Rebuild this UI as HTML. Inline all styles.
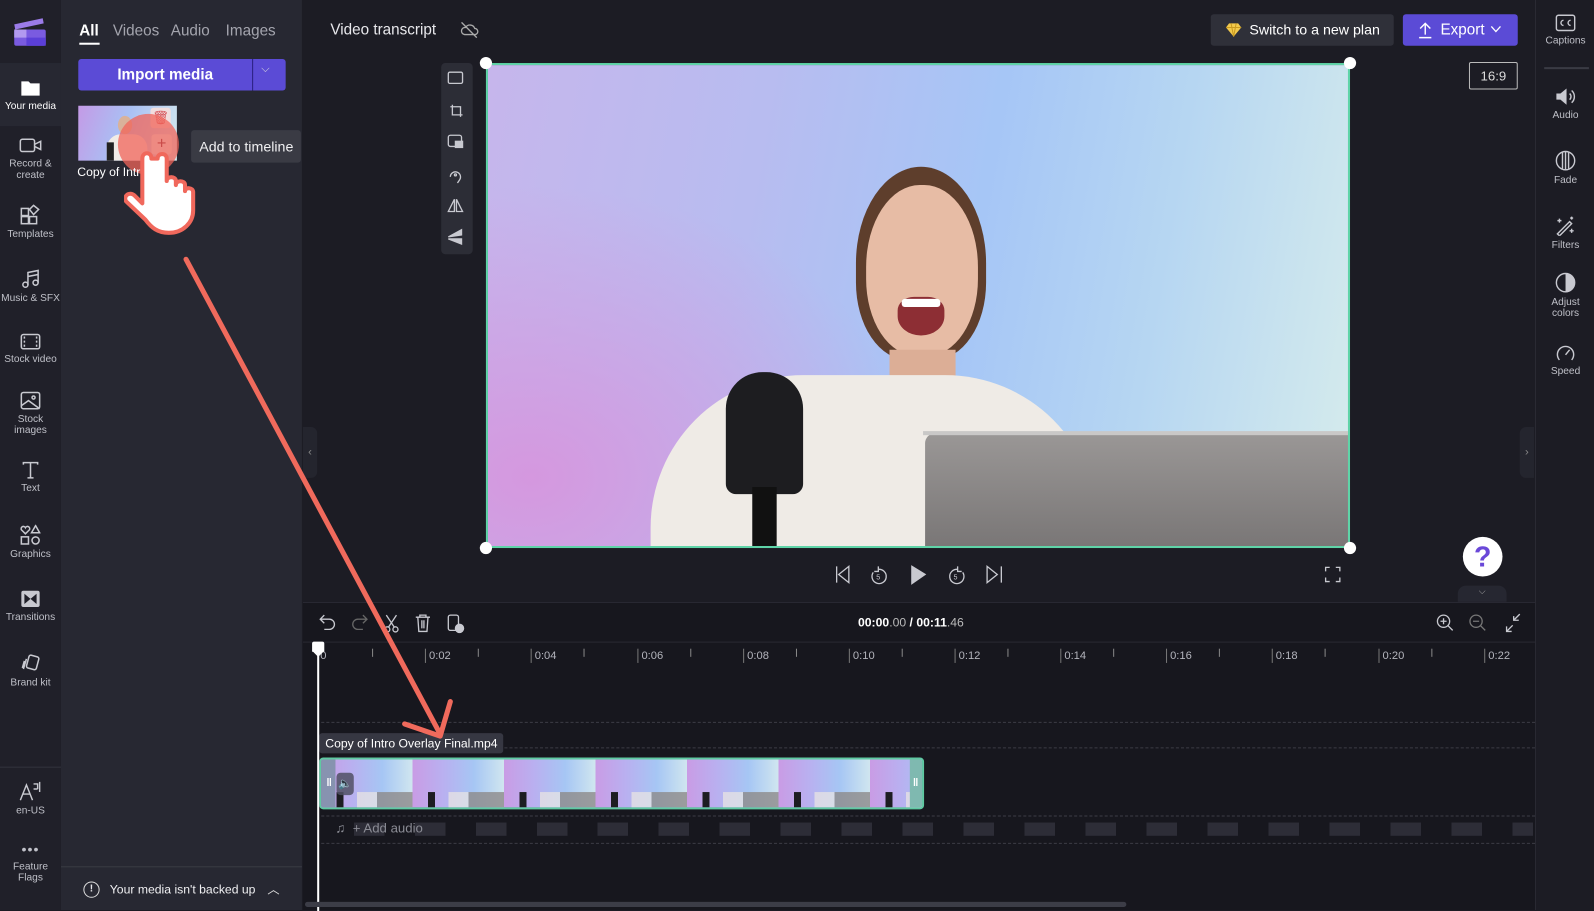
<!DOCTYPE html>
<html><head><meta charset="utf-8"><style>
*{margin:0;padding:0;box-sizing:border-box}
html,body{width:1594px;height:910px;overflow:hidden;background:#1c1c24;font-family:"Liberation Sans",sans-serif;color:#e6e6ea}
#root{position:absolute;left:0;top:0;width:1568px;height:895px;transform:scale(1.01658,1.01676);transform-origin:0 0;background:#1c1c24}
.abs{position:absolute}
.nav{left:0;top:0;width:60px;height:895px;background:#202029}
.navi{position:absolute;left:0;width:60px;text-align:center;font-size:10px;color:#bfc0c8;line-height:11px}
.navi svg{display:block;margin:0 auto 4px}
.panel{left:60px;top:0;width:237px;height:895px;background:#272832}
.tab{position:absolute;top:22px;font-size:15px;color:#a4a5ae}
.rs{left:1510px;top:0;width:58px;height:895px;background:#1c1c24;border-left:1px solid #2b2b34}
.rsi{position:absolute;left:0;width:58px;text-align:center;font-size:10px;color:#bfc0c8;line-height:11px}
.rsi svg{display:block;margin:0 auto 4px}
.tl{left:298px;top:592px;width:1212px;height:303px;background:#17171e;border-top:1px solid #2a2a33}
.tick{position:absolute;top:45px;font-size:11px;color:#b4b5bd;border-left:1px solid #777;padding-left:3px;height:14px;line-height:14px}
.st{position:absolute;top:45px;width:1px;height:8px;background:#888}
</style></head><body><div id="root">

<div class="abs nav">
 <div class="abs" style="left:12px;top:14px;width:34px;height:32px">
  <svg width="34" height="32" viewBox="0 0 34 32"><path d="M2 10 L30 4 L31 9 L3 15Z" fill="#9b7be8"/><rect x="2" y="15" width="31" height="16" rx="2" fill="#7a5be0"/><rect x="2" y="15" width="12" height="8" fill="#b29af0"/><rect x="14" y="23" width="19" height="8" fill="#5b3fd8"/></svg>
 </div>
 <div class="abs" style="left:0;top:62px;width:60px;height:62px;background:#272832"></div>
 <div class="navi" style="top:77px;color:#fff"><svg width="20" height="18" viewBox="0 0 20 18"><path d="M1 3h7l2 2h9v12H1z" fill="#fff"/></svg>Your media</div>
 <div class="navi" style="top:134px"><svg width="22" height="18" viewBox="0 0 22 18" fill="none" stroke="#c8c9d0" stroke-width="1.5"><rect x="1" y="3" width="14" height="12" rx="2"/><path d="M15 8l6-3v8l-6-3"/></svg>Record &amp;<br>create</div>
 <div class="navi" style="top:201px"><svg width="20" height="20" viewBox="0 0 20 20" fill="none" stroke="#c8c9d0" stroke-width="1.5"><rect x="1" y="4" width="7" height="7"/><rect x="1" y="12" width="7" height="7"/><rect x="9" y="12" width="7" height="7"/><path d="M13 1l5 4-5 5-4-5z"/></svg>Templates</div>
 <div class="navi" style="top:264px"><svg width="18" height="20" viewBox="0 0 18 20" fill="none" stroke="#c8c9d0" stroke-width="1.5"><circle cx="4" cy="16" r="2.5"/><circle cx="14" cy="14" r="2.5"/><path d="M6.5 16V4l10-2v12M6.5 8l10-2"/></svg>Music &amp; SFX</div>
 <div class="navi" style="top:328px"><svg width="20" height="16" viewBox="0 0 20 16" fill="none" stroke="#c8c9d0" stroke-width="1.5"><rect x="1" y="1" width="18" height="14" rx="2"/><path d="M4 3v10M16 3v10" stroke-dasharray="2 2"/></svg>Stock video</div>
 <div class="navi" style="top:385px"><svg width="20" height="18" viewBox="0 0 20 18" fill="none" stroke="#c8c9d0" stroke-width="1.5"><rect x="1" y="1" width="18" height="16" rx="2"/><circle cx="13" cy="6" r="1.5"/><path d="M1 14l7-5 11 8"/></svg>Stock<br>images</div>
 <div class="navi" style="top:453px"><svg width="18" height="18" viewBox="0 0 18 18" fill="none" stroke="#c8c9d0" stroke-width="1.5"><path d="M2 4V2h14v2M9 2v15M6 17h6"/></svg>Text</div>
 <div class="navi" style="top:516px"><svg width="20" height="20" viewBox="0 0 20 20" fill="none" stroke="#c8c9d0" stroke-width="1.5"><path d="M5 9L1 5a2 2 0 014-2 2 2 0 014 2z"/><path d="M15 1l4 7h-8z"/><rect x="1" y="12" width="7" height="7"/><circle cx="15" cy="15.5" r="3.5"/></svg>Graphics</div>
 <div class="navi" style="top:580px"><svg width="20" height="18" viewBox="0 0 20 18"><rect x="1" y="1" width="18" height="16" rx="2" fill="#c8c9d0"/><path d="M4 4l6 5-6 5zM16 4l-6 5 6 5z" fill="#202029"/></svg>Transitions</div>
 <div class="navi" style="top:642px"><svg width="20" height="20" viewBox="0 0 20 20" fill="none" stroke="#c8c9d0" stroke-width="1.5"><rect x="7" y="3" width="10" height="13" rx="2" transform="rotate(15 12 10)"/><path d="M6 6L3 16M4 8l-2 7"/></svg>Brand kit</div>
 <div class="abs" style="left:0;top:754px;width:60px;height:1px;background:#33343d"></div>
 <div class="navi" style="top:768px"><svg width="22" height="20" viewBox="0 0 22 20" fill="none" stroke="#c8c9d0" stroke-width="1.4"><path d="M1 19L7 4l6 15M3 13h8M14 3h4v5M20 1v10M14 8h4"/></svg>en-US</div>
 <div class="navi" style="top:830px;font-size:10px"><div style="font-size:14px;letter-spacing:1px;margin-bottom:6px">•••</div>Feature<br>Flags</div>
</div>

<div class="abs panel">
 <div class="tab" style="left:18px;color:#fff;font-weight:bold">All</div>
 <div class="abs" style="left:18px;top:42px;width:20px;height:2px;background:#fff"></div>
 <div class="tab" style="left:51px">Videos</div>
 <div class="tab" style="left:108px">Audio</div>
 <div class="tab" style="left:162px">Images</div>
 <div class="abs" style="left:17px;top:58px;width:204px;height:31px;background:#5b4bd6;border-radius:3px"></div>
 <div class="abs" style="left:17px;top:58px;width:171px;height:31px;line-height:31px;text-align:center;font-size:15px;color:#fff;font-weight:bold">Import media</div>
 <div class="abs" style="left:188px;top:58px;width:1px;height:31px;background:#2a2080"></div>
 <div class="abs" style="left:197px;top:62px;font-size:11px;color:#ddd">⌵</div>
 <div class="abs" style="left:17px;top:104px;width:97px;height:54px;background:linear-gradient(110deg,#c49ae6 0%,#a9c0f4 45%,#d7ecef 100%);overflow:hidden">
   <div class="abs" style="left:39px;top:10px;width:14px;height:18px;border-radius:50%;background:#d9b29a"></div>
   <div class="abs" style="left:28px;top:28px;width:40px;height:30px;border-radius:14px 14px 0 0;background:#f1ece6"></div>
   <div class="abs" style="left:28px;top:36px;width:7px;height:20px;background:#222"></div>
 </div>
 <div class="abs" style="left:88px;top:106px;width:20px;height:20px;background:#f1dede;border-radius:3px;color:#d6545a;font-size:13px;text-align:center;line-height:20px">🗑</div>
 <div class="abs" style="left:56px;top:112px;width:60px;height:60px;border-radius:50%;background:rgba(240,100,90,0.75)"></div>
 <div class="abs" style="left:89px;top:132px;width:20px;height:20px;background:rgba(240,140,130,0.8);border-radius:3px;color:#c94a48;text-align:center;line-height:20px;font-size:16px">+</div>
 <div class="abs" style="left:16px;top:162px;font-size:12px;color:#fff">Copy of Intro</div>
 <div class="abs" style="left:128px;top:128px;width:108px;height:32px;background:#3a3b44;border-radius:3px;font-size:14px;line-height:32px;padding-left:8px;color:#f0f0f2">Add to timeline</div>
 <svg class="abs" style="left:62px;top:148px" width="75" height="95" viewBox="0 0 75 95"><path d="M36 18c0-6 9-6 9 0v22c0-5 9-5 9 0v4c0-5 9-5 9 0v6c0-4 8-4 8 1v18c0 12-10 22-24 22-11 0-17-5-23-13L5 60c-3-5 3-10 8-6l8 8V18c0-7 9-7 9 0z" transform="translate(-3,-10)" fill="#fff" stroke="#f0685c" stroke-width="4" stroke-linejoin="round"/></svg>
 <div class="abs" style="left:0;top:852px;width:237px;height:1px;background:#3a3b44"></div>
 <div class="abs" style="left:22px;top:867px;width:16px;height:16px;border:1.5px solid #ddd;border-radius:50%;font-size:10px;text-align:center;line-height:13px;font-weight:bold">!</div>
 <div class="abs" style="left:48px;top:868px;font-size:12px;color:#f0f0f2">Your media isn't backed up</div>
 <div class="abs" style="left:203px;top:866px;font-size:12px;color:#ddd">︿</div>
</div>

<div class="abs" style="left:325px;top:21px;font-size:15px;color:#e8e8ec">Video transcript</div>
<svg class="abs" style="left:452px;top:21px" width="19" height="17" viewBox="0 0 19 17" fill="none" stroke="#aaa" stroke-width="1.3"><path d="M5 13h10a3 3 0 000-6 5 5 0 00-9-1 3.5 3.5 0 00-1 7zM2 1l15 15"/></svg>
<div class="abs" style="left:1191px;top:14px;width:180px;height:31px;background:#2f3039;border-radius:3px;font-size:14px;line-height:31px;padding-left:38px;color:#fff">Switch to a new plan</div>
<svg class="abs" style="left:1205px;top:22px" width="17" height="15" viewBox="0 0 17 15"><path d="M4 1h9l3 4-7.5 9L1 5z" fill="#f2c94c"/><path d="M1 5h15M6 1l2.5 13L11 1" stroke="#c99a20" fill="none"/></svg>
<div class="abs" style="left:1380px;top:14px;width:113px;height:31px;background:#5b4bd6;border-radius:3px;font-size:15px;line-height:31px;padding-left:37px;color:#fff">Export</div>
<svg class="abs" style="left:1395px;top:21px" width="14" height="17" viewBox="0 0 14 17" fill="none" stroke="#fff" stroke-width="1.4"><path d="M7 13V2M2 7l5-5 5 5M1 16h12"/></svg>
<svg class="abs" style="left:1466px;top:25px" width="11" height="8" viewBox="0 0 11 8" fill="none" stroke="#fff" stroke-width="1.3"><path d="M1 1l4.5 5L10 1"/></svg>
<div class="abs" style="left:1445px;top:61px;width:48px;height:27px;border:1px solid #bbb;border-radius:2px;font-size:13px;line-height:25px;text-align:center;color:#ddd">16:9</div>

<div class="abs" style="left:434px;top:62px;width:31px;height:188px;background:#2c2d36;border-radius:4px"></div>
<svg class="abs" style="left:440px;top:68px" width="20" height="180" viewBox="0 0 20 180" fill="none" stroke="#c8c9d0" stroke-width="1.3">
 <rect x="1" y="3" width="14" height="11" rx="1.5"/>
 <path d="M5 35v10h10M3 37h10v10"/>
 <rect x="1" y="65" width="13" height="11" rx="2"/><rect x="8" y="71" width="7" height="6" fill="#c8c9d0"/>
 <path d="M3 106a5 5 0 119 3l-2 3"/><circle cx="8" cy="104" r="1"/>
 <path d="M7 128v12H1zM9 128v12h6z"/>
 <path d="M14 158v5L1 165zM14 167v5L1 167z" fill="#c8c9d0"/>
</svg>

<div class="abs" style="left:478px;top:62px;width:850px;height:477px;overflow:hidden;border:2px solid #5fd4a8;background:linear-gradient(100deg,#c6b6ec 0%,#b8bcf0 30%,#a6c6f6 55%,#b6d6f2 75%,#d6ecec 100%)">
 <div class="abs" style="left:0;top:0;width:850px;height:477px;background:radial-gradient(ellipse 45% 60% at 5% 85%,rgba(214,150,222,0.95),rgba(214,150,222,0) 100%)"></div>
 <div class="abs" style="left:362px;top:100px;width:128px;height:190px;border-radius:50% 50% 40% 40%;background:#5e3e2c"></div>
 <div class="abs" style="left:372px;top:118px;width:110px;height:168px;border-radius:48% 48% 45% 45%;background:#e7bca5"></div>
 <div class="abs" style="left:403px;top:228px;width:46px;height:38px;border-radius:35% 35% 50% 50%;background:#8d2e34"></div>
 <div class="abs" style="left:407px;top:230px;width:38px;height:8px;border-radius:3px;background:#fff"></div>
 <div class="abs" style="left:395px;top:280px;width:65px;height:50px;background:#dcae96"></div>
 <div class="abs" style="left:160px;top:305px;width:440px;height:200px;border-radius:150px 150px 0 0;background:#efebe6"></div>
 <div class="abs" style="left:234px;top:302px;width:76px;height:120px;border-radius:36px 36px 10px 10px;background:#1d1d20"></div>
 <div class="abs" style="left:260px;top:415px;width:24px;height:70px;background:#111"></div>
 <div class="abs" style="left:430px;top:362px;width:420px;height:120px;border-radius:10px 0 0 0;background:linear-gradient(180deg,#9a9796,#777474)"></div>
 <div class="abs" style="left:428px;top:360px;width:422px;height:4px;background:#c9c8c7"></div>
</div>
<div class="abs" style="left:472px;top:56px;width:12px;height:12px;border-radius:50%;background:#fff"></div>
<div class="abs" style="left:1322px;top:56px;width:12px;height:12px;border-radius:50%;background:#fff"></div>
<div class="abs" style="left:472px;top:533px;width:12px;height:12px;border-radius:50%;background:#fff"></div>
<div class="abs" style="left:1322px;top:533px;width:12px;height:12px;border-radius:50%;background:#fff"></div>

<svg class="abs" style="left:820px;top:554px" width="170" height="22" viewBox="0 0 170 22" fill="none" stroke="#c8c9d0" stroke-width="1.3">
 <path d="M3 3v16M15 3L5 11l10 8z"/>
 <path d="M44 6a7 7 0 11-5 3M44 3v5h-4"/><text x="42" y="16" font-size="7" fill="#c8c9d0" stroke="none" font-family="Liberation Sans">5</text>
 <path d="M77 3l13 8-13 9z" fill="#c8c9d0"/>
 <path d="M122 6a7 7 0 105 3M122 3v5h4"/><text x="118" y="16" font-size="7" fill="#c8c9d0" stroke="none" font-family="Liberation Sans">5</text>
 <path d="M165 3v16M151 3l10 8-10 8z"/>
</svg>
<svg class="abs" style="left:1303px;top:557px" width="16" height="16" viewBox="0 0 16 16" fill="none" stroke="#c8c9d0" stroke-width="1.3"><path d="M1 5V1h4M11 1h4v4M15 11v4h-4M5 15H1v-4"/></svg>
<div class="abs" style="left:1439px;top:528px;width:39px;height:39px;border-radius:50%;background:#fff;font-size:28px;font-weight:bold;color:#6a48d8;text-align:center;line-height:39px">?</div>
<div class="abs" style="left:1434px;top:576px;width:48px;height:16px;background:#262731;border-radius:8px 8px 0 0;font-size:9px;text-align:center;color:#aaa">⌵</div>
<div class="abs" style="left:298px;top:420px;width:14px;height:50px;background:#24252e;border-radius:0 6px 6px 0;color:#888;font-size:11px;line-height:50px;text-align:center">‹</div>
<div class="abs" style="left:1495px;top:420px;width:14px;height:50px;background:#24252e;border-radius:6px 0 0 6px;color:#888;font-size:11px;line-height:50px;text-align:center">›</div>

<div class="abs rs">
 <div class="rsi" style="top:14px"><svg width="20" height="17" viewBox="0 0 20 17" fill="none" stroke="#c8c9d0" stroke-width="1.4"><rect x="1" y="1" width="18" height="15" rx="2"/><path d="M8 6a2.5 2.5 0 100 5M15 6a2.5 2.5 0 100 5"/></svg>Captions</div>
 <div class="abs" style="left:8px;top:66px;width:44px;height:2px;background:#3a3b44"></div>
 <div class="rsi" style="top:86px"><svg width="20" height="18" viewBox="0 0 20 18"><path d="M1 6h4l6-5v16l-6-5H1z" fill="#c8c9d0"/><path d="M14 6a4 4 0 010 6M16 3a8 8 0 010 12" stroke="#c8c9d0" fill="none" stroke-width="1.4"/></svg>Audio</div>
 <div class="rsi" style="top:148px"><svg width="20" height="20" viewBox="0 0 20 20" fill="none" stroke="#c8c9d0" stroke-width="1.4"><circle cx="10" cy="10" r="9"/><path d="M7 2v16M10 1v18M13 2v16"/></svg>Fade</div>
 <div class="rsi" style="top:212px"><svg width="20" height="20" viewBox="0 0 20 20" fill="none" stroke="#c8c9d0" stroke-width="1.4"><path d="M2 18L14 6l2 2L4 20zM4 3v4M2 5h4M16 1v3M14.5 2.5h3M16 13v4M14 15h4"/></svg>Filters</div>
 <div class="rsi" style="top:268px"><svg width="20" height="20" viewBox="0 0 20 20"><circle cx="10" cy="10" r="9" fill="none" stroke="#c8c9d0" stroke-width="1.4"/><path d="M10 1a9 9 0 010 18z" fill="#c8c9d0"/></svg>Adjust<br>colors</div>
 <div class="rsi" style="top:338px"><svg width="20" height="18" viewBox="0 0 20 18" fill="none" stroke="#c8c9d0" stroke-width="1.4"><path d="M4 16a8 8 0 1112 0M10 11l4-5"/></svg>Speed</div>
</div>

<div class="abs tl">
 <svg class="abs" style="left:15px;top:10px" width="150" height="20" viewBox="0 0 150 20" fill="none" stroke="#c8c9d0" stroke-width="1.3">
  <path d="M3 6h8a5 5 0 010 10H6M6 2L2 6l4 4"/>
  <path d="M47 6h-8a5 5 0 000 10h5M44 2l4 4-4 4" stroke="#666"/>
  <path d="M67 2l8 12M77 2l-8 12"/><circle cx="68" cy="16" r="2.5"/><circle cx="76" cy="16" r="2.5"/>
  <path d="M96 4h14M100 4V2h6v2M98 4l1 14h8l1-14M102 7v8M104 7v8"/>
  <rect x="128" y="2" width="10" height="15" rx="2"/><circle cx="139" cy="15" r="4" fill="#c8c9d0"/>
 </svg>
 <div class="abs" style="left:546px;top:12px;font-size:12px;color:#fff;font-weight:bold">00:00<span style="color:#bbb;font-weight:normal">.00</span> / 00:11<span style="color:#bbb;font-weight:normal">.46</span></div>
 <svg class="abs" style="left:1114px;top:10px" width="85" height="20" viewBox="0 0 85 20" fill="none" stroke="#c8c9d0" stroke-width="1.3">
  <circle cx="8" cy="8" r="6"/><path d="M12.5 12.5L17 17M5 8h6M8 5v6"/>
  <circle cx="40" cy="8" r="6" stroke="#777"/><path d="M44.5 12.5L49 17M37 8h6" stroke="#777"/>
  <path d="M70 18l6-6M70 13v5h5M83 1l-6 6M77 3v4h5"/>
 </svg>
 <div class="abs" style="left:0;top:38px;width:1212px;height:1px;background:#2a2a33"></div>
 <div class="tick" style="left:17px;border-left:none;padding-left:0">0</div>
 <div class="st" style="left:68px"></div>
 <div class="tick" style="left:120px">0:02</div><div class="st" style="left:172px"></div>
 <div class="tick" style="left:224px">0:04</div><div class="st" style="left:276px"></div>
 <div class="tick" style="left:329px">0:06</div><div class="st" style="left:381px"></div>
 <div class="tick" style="left:433px">0:08</div><div class="st" style="left:485px"></div>
 <div class="tick" style="left:537px">0:10</div><div class="st" style="left:589px"></div>
 <div class="tick" style="left:641px">0:12</div><div class="st" style="left:693px"></div>
 <div class="tick" style="left:745px">0:14</div><div class="st" style="left:797px"></div>
 <div class="tick" style="left:849px">0:16</div><div class="st" style="left:901px"></div>
 <div class="tick" style="left:953px">0:18</div><div class="st" style="left:1005px"></div>
 <div class="tick" style="left:1058px">0:20</div><div class="st" style="left:1110px"></div>
 <div class="tick" style="left:1162px">0:22</div>
 <div class="abs" style="left:18px;top:117px;width:1194px;border-top:1px dashed #3c3c46"></div>
 <div class="abs" style="left:18px;top:142px;width:1194px;border-top:1px dashed #3c3c46"></div>
 <div class="abs" style="left:18px;top:209px;width:1194px;border-top:1px dashed #3c3c46"></div>
 <div class="abs" style="left:18px;top:236px;width:1194px;border-top:1px dashed #3c3c46"></div>
 <div class="abs" style="left:40px;top:216px;width:1170px;height:13px;background:repeating-linear-gradient(90deg,transparent 0 10px,rgba(60,60,72,0.6) 10px 40px,transparent 40px 60px)"></div>
 <div class="abs" style="left:32px;top:214px;font-size:13px;color:#8b8c95">♫ &nbsp;+ Add audio</div>
 <div class="abs" style="left:16px;top:152px;width:595px;height:51px;border:2px solid #5fc9a2;border-radius:4px;overflow:hidden;background:linear-gradient(90deg,#c99be4,#a6c2f3 50%,#cfe7ee);">
  <div class="abs" style="left:0;top:0;width:595px;height:51px;background:repeating-linear-gradient(90deg,#c99ce5 0px,#b9b0f0 30px,#a6c6f4 60px,#d0e6ef 90px)"></div>
  <div class="abs" style="left:0;top:32px;width:595px;height:18px;background:repeating-linear-gradient(90deg,transparent 0 15px,#1d1d22 15px 22px,transparent 22px 35px,rgba(236,231,226,0.7) 35px 55px,rgba(141,138,137,0.8) 55px 90px)"></div>
  <div class="abs" style="left:0;top:0;width:14px;height:51px;background:#8793b0"></div>
  <div class="abs" style="left:579px;top:0;width:14px;height:51px;background:#7fb9b0"></div>
  <div class="abs" style="left:5px;top:17px;font-size:11px;color:#fff;font-weight:bold">‖</div>
  <div class="abs" style="left:582px;top:17px;font-size:11px;color:#fff;font-weight:bold">‖</div>
  <div class="abs" style="left:15px;top:13px;width:17px;height:22px;background:rgba(80,80,100,0.85);border-radius:4px;color:#eee;font-size:11px;text-align:center;line-height:22px">🔈</div>
 </div>
 <div class="abs" style="left:16px;top:128px;background:#363742;border-radius:3px;padding:3px 6px;font-size:12px;color:#fff">Copy of Intro Overlay Final.mp4</div>
 <div class="abs" style="left:14px;top:44px;width:1.5px;height:259px;background:#fff"></div>
 <div class="abs" style="left:9px;top:38px;width:12px;height:10px;background:#fff;border-radius:2px 2px 0 0"></div>
 <div class="abs" style="left:9px;top:47px;width:0;height:0;border-left:6px solid transparent;border-right:6px solid transparent;border-top:6px solid #fff"></div>
 <div class="abs" style="left:2px;top:294px;width:808px;height:5px;background:#3c3d47;border-radius:3px"></div>
</div>

<svg class="abs" style="left:0;top:0" width="1568" height="895" viewBox="0 0 1568 895">
 <path d="M183 255L433 722" stroke="#f06a5c" stroke-width="5" stroke-linecap="round" fill="none"/>
 <path d="M398 712L433 724L443 690" stroke="#f06a5c" stroke-width="5" stroke-linecap="round" stroke-linejoin="round" fill="none"/>
</svg>
</div></body></html>
